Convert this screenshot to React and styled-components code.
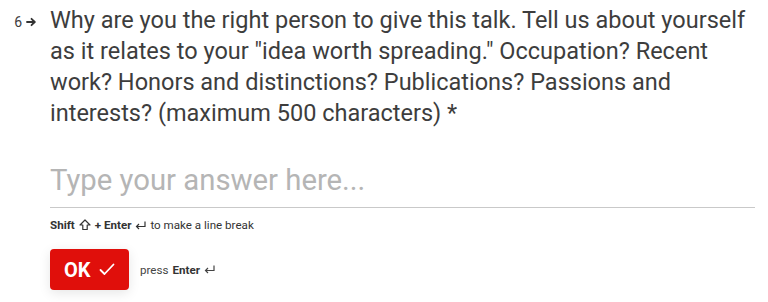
import React from "react";
import styled, { createGlobalStyle } from "styled-components";

const Global = createGlobalStyle`
  html, body { margin: 0; padding: 0; background: #fff; }
  body { font-family: Roboto, "Noto Sans", Arial, sans-serif; }
`;

const Page = styled.div`
  width: 768px;
  height: 302px;
  overflow: hidden;
  display: grid;
  grid-template-columns: 50px 1fr;
  padding-right: 13px;
  box-sizing: border-box;
`;

const Counter = styled.div`
  display: flex;
  align-items: center;
  justify-content: flex-end;
  gap: 4px;
  padding-right: 14px;
  height: 24px;
  margin-top: 10px;
  font-size: 14px;
  color: #3d3d3d;
`;

const Body = styled.div`
  display: flex;
  flex-direction: column;
`;

const Question = styled.h1`
  margin: 0;
  padding-top: 5px;
  font-size: 23.5px;
  font-weight: 400;
  line-height: 31px;
  color: #3d3d3d;
`;

const Input = styled.div`
  margin-top: 32px;
  padding-bottom: 8px;
  border-bottom: 1.5px solid #c9c9c9;
  font-size: 29.3px;
  line-height: 38px;
  color: #b5b5b5;
`;

const Hint = styled.div`
  margin-top: 9px;
  font-size: 11.6px;
  line-height: 16px;
  color: #333;
  display: flex;
  align-items: center;
  gap: 4px;
  b { font-weight: 700; }
`;

const Actions = styled.div`
  margin-top: 16px;
  display: flex;
  align-items: center;
  gap: 11px;
`;

const OkButton = styled.button`
  display: flex;
  align-items: center;
  gap: 8px;
  height: 41px;
  width: 79px;
  padding: 0 0 0 14px;
  border: none;
  border-radius: 4px;
  background: #e00f0b;
  color: #fff;
  font-family: inherit;
  font-size: 20px;
  font-weight: 700;
  box-shadow: 0 3px 12px rgba(0, 0, 0, 0.1);
`;

const Press = styled.span`
  font-size: 11.6px;
  color: #444;
  display: flex;
  align-items: center;
  gap: 4px;
  b { font-weight: 700; color: #333; }
`;

const EnterIcon = () => (
  <svg width="11" height="9" viewBox="0 0 11 9" fill="none" stroke="currentColor" strokeWidth="1.2">
    <path d="M10 0.5V5.5H1.5" />
    <path d="M4 3L1.5 5.5L4 8" />
  </svg>
);

const ShiftIcon = () => (
  <svg width="12" height="12" viewBox="0 0 12 12" fill="none" stroke="currentColor" strokeWidth="1.2" strokeLinejoin="round">
    <path d="M6 1L11 6H8.2V10.5H3.8V6H1Z" />
  </svg>
);

const Arrow = () => (
  <svg width="10" height="10" viewBox="0 0 10 10" fill="none" stroke="#333" strokeWidth="1.8" strokeLinecap="round" strokeLinejoin="round">
    <path d="M1 5H8.5" />
    <path d="M5.5 1.8L8.7 5L5.5 8.2" />
  </svg>
);

const Check = () => (
  <svg width="16" height="13" viewBox="0 0 16 13" fill="none" stroke="#fff" strokeWidth="1.8" strokeLinecap="round" strokeLinejoin="round">
    <path d="M1.5 7L5.5 11L14.5 1.5" />
  </svg>
);

export default function App() {
  return (
    <>
      <Global />
      <Page>
        <Counter>
          <span>6</span>
          <Arrow />
        </Counter>
        <Body>
          <Question>
            Why are you the right person to give this talk. Tell us about yourself as it relates to your "idea worth spreading." Occupation? Recent work? Honors and distinctions? Publications? Passions and interests? (maximum 500 characters) *
          </Question>
          <Input>Type your answer here...</Input>
          <Hint>
            <b>Shift</b> <ShiftIcon /> <b>+ Enter</b> <EnterIcon /> to make a line break
          </Hint>
          <Actions>
            <OkButton>
              OK <Check />
            </OkButton>
            <Press>
              press <b>Enter</b> <EnterIcon />
            </Press>
          </Actions>
        </Body>
      </Page>
    </>
  );
}
